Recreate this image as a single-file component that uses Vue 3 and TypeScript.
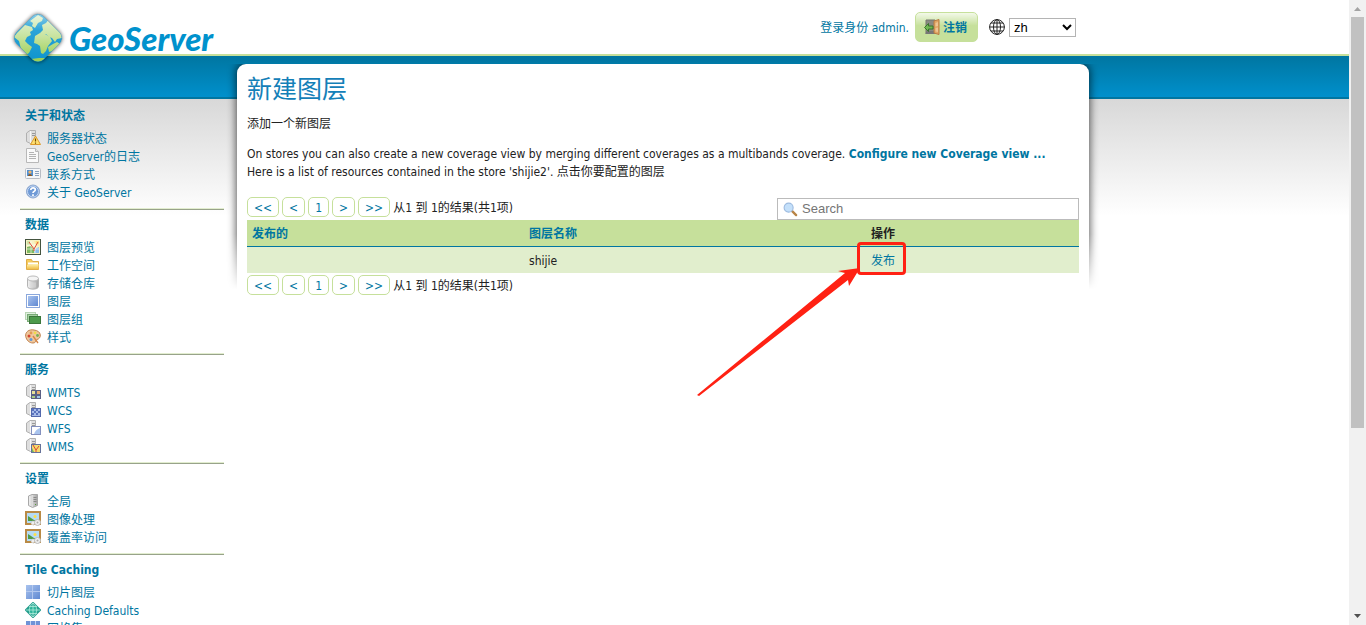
<script setup lang="ts">
import { ref } from 'vue'

interface MenuItem { label: string; icon: string }
interface MenuGroup { title: string; items: MenuItem[] }

const groups: MenuGroup[] = [
  {
    title: '关于和状态',
    items: [
      { label: '服务器状态', icon: 'status' },
      { label: 'GeoServer的日志', icon: 'page' },
      { label: '联系方式', icon: 'card' },
      { label: '关于 GeoServer', icon: 'help' },
    ],
  },
  {
    title: '数据',
    items: [
      { label: '图层预览', icon: 'preview' },
      { label: '工作空间', icon: 'folder' },
      { label: '存储仓库', icon: 'database' },
      { label: '图层', icon: 'layer' },
      { label: '图层组', icon: 'layers' },
      { label: '样式', icon: 'palette' },
    ],
  },
  {
    title: '服务',
    items: [
      { label: 'WMTS', icon: 'wmts' },
      { label: 'WCS', icon: 'wcs' },
      { label: 'WFS', icon: 'wfs' },
      { label: 'WMS', icon: 'wms' },
    ],
  },
  {
    title: '设置',
    items: [
      { label: '全局', icon: 'server' },
      { label: '图像处理', icon: 'image' },
      { label: '覆盖率访问', icon: 'image' },
    ],
  },
  {
    title: 'Tile Caching',
    items: [
      { label: '切片图层', icon: 'tiles' },
      { label: 'Caching Defaults', icon: 'globe' },
      { label: '网格集', icon: 'grid' },
    ],
  },
]

const pagerButtons: string[] = ['<<', '<', '1', '>', '>>']
const resultText = '从1 到 1的结果(共1项)'
const language = ref('zh')
const search = ref('')
const layers = ref([{ name: 'shijie' }])
</script>

<template>
  <div class="window">
    <svg class="sprite" aria-hidden="true">
      <defs>
        <linearGradient id="steel" x1="0" x2="1" y1="0" y2="0">
          <stop offset="0" stop-color="#f4f4f4" /><stop offset="1" stop-color="#a5a5a5" />
        </linearGradient>
        <linearGradient id="blue" x1="0" x2="1" y1="0" y2="1">
          <stop offset="0" stop-color="#a9c3ee" /><stop offset="1" stop-color="#6089d2" />
        </linearGradient>
        <linearGradient id="gold" x1="0" x2="0" y1="0" y2="1">
          <stop offset="0" stop-color="#fff3b0" /><stop offset="1" stop-color="#f0be48" />
        </linearGradient>
        <linearGradient id="ocean" x1="0" x2="0" y1="0" y2="1">
          <stop offset="0" stop-color="#8fd0ea" /><stop offset="0.35" stop-color="#2aa3d8" /><stop offset="1" stop-color="#0c93cd" />
        </linearGradient>
        <linearGradient id="land" gradientUnits="userSpaceOnUse" x1="0" x2="0" y1="4" y2="46">
          <stop offset="0" stop-color="#e6f3d6" /><stop offset="0.5" stop-color="#c5e29a" /><stop offset="1" stop-color="#9ccf55" />
        </linearGradient>
        <clipPath id="diamond"><rect x="6" y="6" width="38" height="38" rx="8" transform="rotate(45 25 25)" /></clipPath>
      </defs>
      <symbol id="i-server" viewBox="0 0 16 16">
        <path d="M3.500 3 7 1.500h5.500v11L7.500 14.500l-4-2z" fill="url(#steel)" stroke="#a8a8a8" />
        <path d="M7.500 2v12" stroke="#ddd" />
        <path d="M8.500 4.500h3M8.500 6.500h3M8.500 8.500h3" stroke="#888" />
        <path d="M10 11.500h1" stroke="#55a03c" />
      </symbol>
      <symbol id="i-host" viewBox="0 0 16 16">
        <path d="M1.500 3 5 .5h5.500v12l-5 1-4-2z" fill="#dedede" stroke="#b0b0b0" />
        <path d="M5.500 1v12" stroke="#f7f7f7" />
        <path d="M7 3.500h3M7 5.500h3" stroke="#999" />
      </symbol>
      <symbol id="i-status" viewBox="0 0 16 16">
        <use href="#i-host" />
        <path d="m10.500 6 5 8.500h-10z" fill="#ffe070" stroke="#dd9a2c" stroke-linejoin="round" />
        <path d="M10.500 8.500v3M10.500 12.500v1.200" stroke="#714700" stroke-width="1.200" />
      </symbol>
      <symbol id="i-page" viewBox="0 0 16 16">
        <path d="M1.500.5h9l3 3v11h-12z" fill="#fafafa" stroke="#b8b8b8" />
        <path d="M10.500.5v3h3" fill="#e5e5e5" stroke="#b8b8b8" />
        <path d="M4 4.500h5M4 6.500h7M4 8.500h7M4 10.500h7" stroke="#b4b4b4" />
      </symbol>
      <symbol id="i-card" viewBox="0 0 16 16">
        <rect x=".5" y="2.500" width="15" height="10" rx="1" fill="#f4f6f9" stroke="#b9bdc4" />
        <rect x="2" y="4" width="6" height="6" fill="#4f8fd2" />
        <circle cx="5" cy="6" r="1.600" fill="#f2b568" /><path d="M3 10c0-2.500 4-2.500 4 0z" fill="#8c551e" />
        <path d="M10 5.500h4M10 7.500h4M10 9.500h4" stroke="#8aa2bf" />
      </symbol>
      <symbol id="i-help" viewBox="0 0 16 16">
        <circle cx="8" cy="7.500" r="6.500" fill="#6f9ad6" stroke="#8ca6cd" />
        <circle cx="8" cy="7.500" r="5.500" fill="none" stroke="#c5d8f3" />
        <path d="M5.800 6c0-3 4.500-2.700 4.500-.2C10.300 7.500 8 7.200 8 9M8 10.300v1.700" fill="none" stroke="#fff" stroke-width="1.700" />
      </symbol>
      <symbol id="i-preview" viewBox="0 0 16 16">
        <rect x=".5" y=".5" width="15" height="15" fill="#f6f2c4" stroke="#44533f" />
        <path d="M2 8l4-1 3 4v3H2z" fill="#7fb962" /><path d="M9 2h5v5l-4-1z" fill="#f9df7e" />
        <path d="M10 10l4-2v6H9z" fill="#8dbde8" /><path d="M2 2h3v4H2z" fill="#cfe3a4" />
        <path d="M2 6h12M2 10h12M6 2v12M10 2v12" stroke="#fff" stroke-opacity=".6" />
        <path d="m4 3 5 7 4-7M9 10v2" fill="none" stroke="#de4b38" stroke-width="1" />
      </symbol>
      <symbol id="i-folder" viewBox="0 0 16 16">
        <path d="M1.500 12.500v-10h5l1 2h6v8z" fill="#f5cb5c" stroke="#e0ac46" />
        <path d="M3 5.500h10v2H3z" fill="#fff" /><path d="M2 8h5l1-1h5.500v5H2z" fill="url(#gold)" />
      </symbol>
      <symbol id="i-database" viewBox="0 0 16 16">
        <path d="M2.500 3.500v8c0 3.500 11 3.500 11 0v-8z" fill="url(#steel)" stroke="#b4b4b4" />
        <ellipse cx="8" cy="3.500" rx="5.500" ry="2.500" fill="#f5f5f5" stroke="#bbb" />
        <path d="M6 7.500v5M8 7.500v5M10 7.500v5" stroke="#dcdcdc" />
      </symbol>
      <symbol id="i-layer" viewBox="0 0 16 16">
        <rect x="1.500" y="1.500" width="13" height="13" fill="#fff" stroke="#8ba8dc" />
        <rect x="3" y="3" width="10" height="10" fill="url(#blue)" />
      </symbol>
      <symbol id="i-layers" viewBox="0 0 16 16">
        <rect x=".5" y="1.500" width="10" height="7" fill="#e1f0df" stroke="#b7d4b4" />
        <rect x="2.500" y="3.500" width="10" height="7" fill="#a5cfa1" stroke="#78aa76" />
        <rect x="4.500" y="5.500" width="11" height="7" fill="#4d9a4b" stroke="#3c773b" />
      </symbol>
      <symbol id="i-palette" viewBox="0 0 16 16">
        <path d="M9 1C4 0 0 3 .7 7.500 1.500 11 4 14 8 14c3 .3 2-2.500 4-3.500 2-.5 3.500-2 3.300-4.500C15 3 12.500 1.500 9 1z" fill="#efc79c" stroke="#c08350" />
        <circle cx="4" cy="7" r="1.500" fill="#d3472f" /><circle cx="6" cy="4" r="1.400" fill="#df9a53" />
        <circle cx="10" cy="3.800" r="1.400" fill="#ecdc49" /><circle cx="12.500" cy="6.500" r="1.400" fill="#72af55" />
        <circle cx="6" cy="10.500" r="1.500" fill="#6297d4" /><path d="m8 7 5 7" stroke="#d58444" stroke-width="1.300" />
      </symbol>
      <symbol id="i-wmts" viewBox="0 0 16 16">
        <use href="#i-host" />
        <rect x="6" y="6" width="10" height="9" fill="#5b6085" />
        <path d="M7 7h3v3H7z" fill="#e8e19a" /><path d="M12 7h3v3h-3z" fill="#e6ad70" />
        <path d="M7 12h3v2H7z" fill="#a9cc84" /><path d="M12 12h3v2h-3z" fill="#9ec5ea" />
      </symbol>
      <symbol id="i-wcs" viewBox="0 0 16 16">
        <use href="#i-host" />
        <rect x="6.500" y="6.500" width="9" height="8" fill="#a8bce8" stroke="#5368ac" />
        <path d="M7 7h2v2H7zM11 7h2v2h-2zM9 9h2v2H9zM13 9h2v2h-2zM7 11h2v2H7zM11 11h2v2h-2z" fill="#5a72bd" />
      </symbol>
      <symbol id="i-wfs" viewBox="0 0 16 16">
        <use href="#i-host" />
        <rect x="6.500" y="6.500" width="9" height="8" fill="#fff" stroke="#8490be" />
        <path d="M15 8v6H9c1-3 3-5 6-6z" fill="#a9c4ee" />
      </symbol>
      <symbol id="i-wms" viewBox="0 0 16 16">
        <use href="#i-host" />
        <rect x="6.500" y="6.500" width="9" height="8" fill="#f5dc6d" stroke="#66729a" />
        <path d="m8 7 3 5 3-4M11 12v2" fill="none" stroke="#dc4634" /><path d="M7 10v4h2z" fill="#74b45d" />
      </symbol>
      <symbol id="i-image" viewBox="0 0 16 16">
        <rect x="1" y="1" width="14" height="12" fill="#b5dbf5" stroke="#b98a45" stroke-width="2" />
        <path d="M3 10V5l3 2 3 2 3 1z" fill="#4f9a45" /><circle cx="10" cy="5.500" r="1.500" fill="#ffdf45" />
        <circle cx="8" cy="12" r="2" fill="#eee" stroke="#b5b5b5" stroke-dasharray="1 1" />
        <circle cx="12.500" cy="11.500" r="3" fill="#efefef" stroke="#bbb" /><circle cx="12.500" cy="11.500" r="1" fill="#aaa" />
      </symbol>
      <symbol id="i-tiles" viewBox="0 0 16 16">
        <path d="M1 1h14v14H1z" fill="#b3c8ee" />
        <path d="M1 1h6v6H1zM8 1h7v6H8zM1 8h6v7H1zM8 8h7v7H8z" fill="url(#blue)" />
      </symbol>
      <symbol id="i-grid" viewBox="0 0 16 16">
        <path d="M1 1h14v14H1z" fill="#c5d6f4" />
        <path d="M1 1h4v4H1zM6 1h4v4H6zM11 1h4v4h-4zM1 6h4v4H1zM6 6h4v4H6zM11 6h4v4h-4z" fill="#6f93d7" />
      </symbol>
      <symbol id="i-globe" viewBox="0 0 16 16">
        <path d="M8 1 15 8l-7 7-7-7z" fill="#2eb59b" stroke="#239d8c" stroke-width="2" stroke-linejoin="round" />
        <path d="M4 4.500h8M1 8h14M4 11.500h8M8 1v14M8 1C3 5 3 11 8 15M8 1c5 4 5 10 0 14" fill="none" stroke="#bff0e3" stroke-width=".7" />
      </symbol>
    </svg>

    <div class="page">
      <header class="header">
        <div class="header-inner">
          <a class="logo" href="#">
            <svg class="logo-mark" viewBox="0 0 50 50" aria-hidden="true">
              <rect class="mark-shadow" x="6" y="6" width="38" height="38" rx="8" transform="rotate(45 25 25)" />
              <g clip-path="url(#diamond)">
                <rect width="50" height="50" fill="url(#ocean)" />
                <g fill="url(#land)">
                  <path d="m4 20 8-8 7 2 1 3-3 2 1 3-4 2-2 4 3 3 4 3-3 6-3 2-5-6-2-8-5-4z" />
                  <path d="m17 8 8-6 5 3-1 3-4 2-3 5-3-2 1-3z" />
                  <path d="m29 12 4-2 3-4 14 14-1 5-5 1-2 3-3-4-3-1-3-3-4 1-2-2 3-3z" />
                  <path d="m22 23 5-3 5 1 5 3 2 4-4 5-2 5-3 3-2-1-1-7-3-2-3-1z" />
                  <path d="m35 34 5-3 4-2 3 2-7 7-4 1z" />
                  <path d="m18 46 8-1 8 0-4 6h-8z" />
                </g>
              </g>
            </svg>
            <span class="logo-text">GeoServer</span>
          </a>
          <form class="session" @submit.prevent>
            <span class="user">登录身份 admin.</span>
            <button class="logout" type="button">
              <svg viewBox="0 0 16 16" aria-hidden="true">
                <path d="M2 1h9v13H2z" fill="#8a8a82" stroke="#77776f" /><path d="M3 12h7l2 3H1z" fill="#777" />
                <path d="m10 2 5-1.500v15L10 14z" fill="#e0a665" stroke="#b87a42" />
                <path d="M11.500 4 14 3v4l-2.500.5zM11.500 9l2.500-.5V13l-2.500-.5z" fill="#edc492" />
                <path d="m.5 8.500 4-4V7H9v3H4.500v2.500z" fill="#72b854" stroke="#39752b" />
              </svg>
              <span>注销</span>
            </button>
            <svg class="world" viewBox="0 0 16 16" aria-hidden="true">
              <g fill="none" stroke="#222" stroke-width="1">
                <circle cx="8" cy="8" r="7.400" /><ellipse cx="8" cy="8" rx="3.500" ry="7.400" />
                <path d="M8 .5v15M.5 8h15M2 4h12M2 12h12" />
              </g>
            </svg>
            <select v-model="language" class="language" aria-label="Language">
              <option value="zh">zh</option>
              <option value="en">en</option>
            </select>
          </form>
        </div>
      </header>

      <div class="body">
        <div class="columns">
          <nav class="sidebar">
            <section v-for="group in groups" :key="group.title" class="group">
              <h3>{{ group.title }}</h3>
              <ul>
                <li v-for="item in group.items" :key="item.label">
                  <a href="#">
                    <svg class="icon" aria-hidden="true"><use :href="'#i-' + item.icon" /></svg>
                    <span>{{ item.label }}</span>
                  </a>
                </li>
              </ul>
            </section>
          </nav>

          <main class="panel">
            <h1>新建图层</h1>
            <p class="subtitle">添加一个新图层</p>
            <p class="intro">
              On stores you can also create a new coverage view by merging different coverages as a multibands coverage.
              <a href="#">Configure new Coverage view ...</a><br />
              Here is a list of resources contained in the store 'shijie2'. 点击你要配置的图层
            </p>
            <div class="toolbar">
              <div class="pager">
                <button v-for="label in pagerButtons" :key="label" type="button">{{ label }}</button>
                <span>{{ resultText }}</span>
              </div>
              <label class="search">
                <svg viewBox="0 0 16 16" aria-hidden="true">
                  <path d="m9.500 9.500 4.500 4.500" stroke="#b88445" stroke-width="2.500" stroke-linecap="round" />
                  <circle cx="6" cy="6" r="4.800" fill="#c4e0fa" stroke="#9dbbe0" stroke-width="1.200" />
                </svg>
                <input v-model="search" type="text" placeholder="Search" aria-label="Search" />
              </label>
            </div>
            <table>
              <thead>
                <tr>
                  <th class="published"><a href="#">发布的</a></th>
                  <th class="name"><a href="#">图层名称</a></th>
                  <th>操作</th>
                </tr>
              </thead>
              <tbody>
                <tr v-for="layer in layers" :key="layer.name">
                  <td></td>
                  <td>{{ layer.name }}</td>
                  <td>
                    <span class="marked">
                      <a href="#">发布</a>
                      <span class="frame"></span>
                      <svg class="arrow" viewBox="0 0 166 132" aria-hidden="true">
                        <path d="M1 129 149 7l-7-2 22-3-11 18-1-6L3 130z" fill="#ff2113" />
                      </svg>
                    </span>
                  </td>
                </tr>
              </tbody>
            </table>
            <div class="pager bottom">
              <button v-for="label in pagerButtons" :key="label" type="button">{{ label }}</button>
              <span>{{ resultText }}</span>
            </div>
          </main>
        </div>
      </div>
    </div>

    <div class="scrollbar" aria-hidden="true">
      <svg viewBox="0 0 17 17"><path d="m5 11 3.500-4 3.500 4z" fill="#a3a3a3" /></svg>
      <div class="track"><div class="thumb"></div></div>
      <svg viewBox="0 0 17 17"><path d="m5 6 3.500 4L12 6z" fill="#505050" /></svg>
    </div>
  </div>
</template>

<style>
body {
  margin: 0;
  background: #fff;
}
</style>

<style scoped>
.window {
  display: flex;
  height: 100vh;
  overflow: hidden;
  font: 12px/18px "DejaVu Sans Condensed", "Noto Sans CJK SC", sans-serif;
  color: #222;
}
.sprite {
  position: absolute;
  width: 0;
  height: 0;
}
a {
  color: #0076a1;
  text-decoration: none;
}
h1, h3, p, ul {
  margin: 0;
  padding: 0;
}
ul {
  list-style: none;
}
.page {
  flex: 1;
  min-width: 0;
}
.header {
  height: 54px;
  border-bottom: 2px solid #c6e09b;
}
.header-inner {
  display: flex;
  justify-content: space-between;
  max-width: 1076px;
}
.logo {
  display: flex;
  position: relative;
  z-index: 1;
  padding: 13px 0 0 13px;
}
.logo-mark {
  width: 50px;
  height: 50px;
  overflow: visible;
}
.mark-shadow {
  fill: #0c93cd;
  filter: drop-shadow(0 0 2px rgba(0, 0, 0, 0.8));
}
.logo-text {
  margin-left: 6px;
  font: italic 900 33px/50px Lato, sans-serif;
  color: #0092cd;
}
.session {
  display: flex;
  align-items: center;
  height: 54px;
}
.user {
  padding-top: 2px;
  color: #0076a1;
}
.logout {
  display: flex;
  align-items: center;
  gap: 3px;
  height: 30px;
  margin: 0 11px 0 6px;
  padding: 0 10px 0 8px;
  border: 1px solid #c6e09b;
  border-radius: 5px;
  background: linear-gradient(#f3f9e9, #c6e09b 45%);
  color: #0076a1;
  font: inherit;
  font-weight: bold;
}
.logout span {
  padding-top: 2px;
}
.logout svg, .world {
  width: 16px;
  height: 16px;
}
.language {
  width: 67px;
  height: 19px;
  margin-left: 4px;
  border: 1px solid #b4b4b4;
  background: #fff;
  color: #000;
  font: 13px "Liberation Sans", Arial, sans-serif;
}
.body {
  background:
    linear-gradient(#0076a1, #0090cc 41px, #0076a1 41px, #0076a1 43px, transparent 43px),
    linear-gradient(#d8d8d8 43px, #fff 160px);
}
.columns {
  display: grid;
  grid-template-columns: 204px minmax(0, 852px);
  column-gap: 13px;
  padding-left: 20px;
}
.sidebar {
  padding-top: 45px;
}
.group {
  padding: 6px 5px 7px;
  border-bottom: 1px solid #98a38a;
  box-shadow: inset 0 -1px #e2edcf;
}
.group h3 {
  margin-bottom: 5px;
  font-size: 12px;
  line-height: 18px;
  color: #0076a1;
}
.group a {
  display: flex;
  gap: 6px;
  height: 18px;
}
.icon {
  width: 16px;
  height: 16px;
}
.panel {
  position: relative;
  z-index: 0;
  margin-top: 8px;
  padding: 10px;
}
.panel::after {
  content: "";
  position: absolute;
  z-index: -1;
  inset: 0 0 auto;
  height: 226px;
  border-radius: 9px 9px 0 0;
  background: #fff;
  box-shadow: 0 0 8px 1px rgba(0, 0, 0, 0.65);
  clip-path: inset(-12px -12px 0);
  mask: linear-gradient(#000 170px, transparent) no-clip;
  pointer-events: none;
}
h1 {
  font-size: 25px;
  font-weight: normal;
  line-height: 32px;
  color: #1480b8;
}
.subtitle {
  margin-top: 9px;
}
.intro {
  margin-top: 12px;
}
.intro a {
  font-weight: bold;
}
.toolbar {
  display: flex;
  justify-content: space-between;
  align-items: flex-end;
  height: 22px;
  margin-top: 17px;
}
.pager {
  display: flex;
  align-items: center;
  gap: 3px;
  height: 20px;
}
.toolbar .pager {
  margin-bottom: 3px;
}
.pager span {
  padding-top: 2px;
}
.pager button {
  height: 20px;
  padding: 2px 6px 0;
  border: 1px solid #c6e09b;
  border-radius: 5px;
  background: #fff;
  color: #0076a1;
  font: inherit;
  line-height: 16px;
}
.search {
  display: flex;
  align-items: center;
  box-sizing: border-box;
  width: 302px;
  height: 22px;
  padding-left: 5px;
  border: 1px solid #bbb;
  background: #fff;
}
.search svg {
  width: 15px;
  height: 15px;
}
.search input {
  flex: 1;
  min-width: 0;
  padding: 0 4px 2px;
  border: 0;
  outline: 0;
  background: none;
  font: 13px "Liberation Sans", Arial, sans-serif;
}
.search input::placeholder {
  color: #757575;
}
table {
  width: 100%;
  border-collapse: separate;
  border-spacing: 0;
  table-layout: fixed;
}
th, td {
  box-sizing: border-box;
  padding: 5px 5px 3px;
}
th {
  border-bottom: 1px solid #0076a1;
  background: #c6e09b;
  text-align: left;
}
td {
  background: #e1eecd;
}
.published {
  width: 33.3%;
}
.name {
  width: 41.1%;
}
.marked {
  position: relative;
}
.frame {
  position: absolute;
  top: -12px;
  left: -14px;
  width: 43px;
  height: 27px;
  border: 3px solid #ff2113;
  border-radius: 4px;
}
.arrow {
  position: absolute;
  top: 12px;
  left: -175px;
  width: 166px;
  height: 132px;
}
.bottom {
  margin-top: 2px;
}
.scrollbar {
  display: flex;
  flex-direction: column;
  width: 17px;
  background: #f1f1f1;
}
.scrollbar svg {
  width: 17px;
  height: 17px;
}
.track {
  flex: 1;
  padding: 0 2px;
}
.thumb {
  height: 69.5%;
  background: #c1c1c1;
}
</style>
